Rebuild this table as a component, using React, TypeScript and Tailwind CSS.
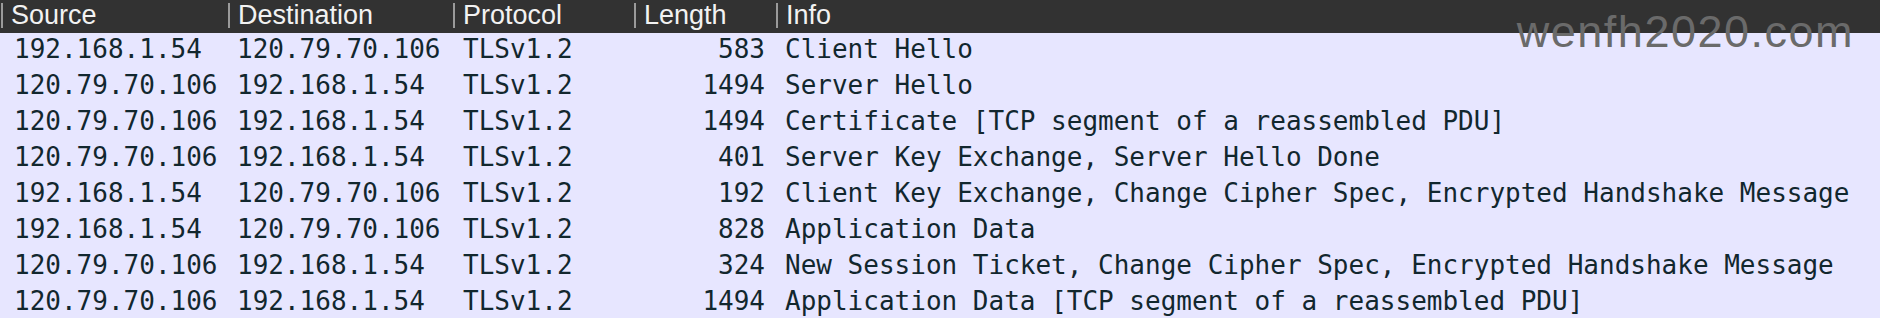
const packets = [
  { src: "192.168.1.54", dst: "120.79.70.106", proto: "TLSv1.2", len: "583", info: "Client Hello" },
  { src: "120.79.70.106", dst: "192.168.1.54", proto: "TLSv1.2", len: "1494", info: "Server Hello" },
  { src: "120.79.70.106", dst: "192.168.1.54", proto: "TLSv1.2", len: "1494", info: "Certificate [TCP segment of a reassembled PDU]" },
  { src: "120.79.70.106", dst: "192.168.1.54", proto: "TLSv1.2", len: "401", info: "Server Key Exchange, Server Hello Done" },
  { src: "192.168.1.54", dst: "120.79.70.106", proto: "TLSv1.2", len: "192", info: "Client Key Exchange, Change Cipher Spec, Encrypted Handshake Message" },
  { src: "192.168.1.54", dst: "120.79.70.106", proto: "TLSv1.2", len: "828", info: "Application Data" },
  { src: "120.79.70.106", dst: "192.168.1.54", proto: "TLSv1.2", len: "324", info: "New Session Ticket, Change Cipher Spec, Encrypted Handshake Message" },
  { src: "120.79.70.106", dst: "192.168.1.54", proto: "TLSv1.2", len: "1494", info: "Application Data [TCP segment of a reassembled PDU]" },
];

const columns = ["Source", "Destination", "Protocol", "Length", "Info"];

function HeaderCell({ label }: { label: string }) {
  return (
    <div className="flex h-full items-center pb-[3px]">
      <div className="h-[25px] w-[2px] bg-[#9a9a9a]" />
      <span className="ml-[8px] leading-[28px]">{label}</span>
    </div>
  );
}

export default function App() {
  return (
    <div className="relative h-[318px] w-[1880px] overflow-hidden bg-[#e7e6ff]">
      <div
        className="grid h-[33px] grid-cols-[227px_225px_181px_142px_1fr] bg-[#323232] pl-[1px] text-[27px] text-[#f2f2f2]"
        style={{ fontFamily: '"Liberation Sans", Arial, sans-serif' }}
      >
        {columns.map((c) => (
          <HeaderCell key={c} label={c} />
        ))}
      </div>

      <div
        className="text-[26px] text-[#12272e]"
        style={{ fontFamily: '"DejaVu Sans Mono", monospace' }}
      >
        {packets.map((p, i) => (
          <div
            key={i}
            className="grid h-[36px] grid-cols-[227px_225px_181px_142px_1fr] whitespace-pre leading-[32px]"
          >
            <span className="pl-[14px]">{p.src}</span>
            <span className="pl-[10px]">{p.dst}</span>
            <span className="pl-[11px]">{p.proto}</span>
            <span className="pr-[10px] text-right">{p.len}</span>
            <span className="pl-[10px]">{p.info}</span>
          </div>
        ))}
      </div>

      <div
        className="absolute right-[26px] top-[10px] text-[45px] leading-[44px] tracking-[1.5px] text-[#6a6a6a]"
        style={{ fontFamily: '"Liberation Sans", Arial, sans-serif' }}
      >
        wenfh2020.com
      </div>
    </div>
  );
}
